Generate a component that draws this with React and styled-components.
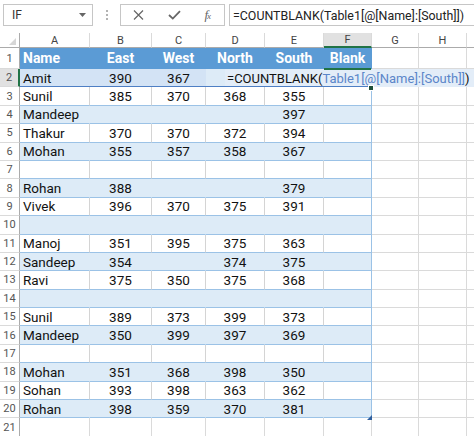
import React from 'react';
import styled, { createGlobalStyle } from 'styled-components';

const Global = createGlobalStyle`
  html, body { margin: 0; padding: 0; background: #fff; }
  body {
    width: 474px; height: 436px; overflow: hidden;
    font-family: Roboto, "Noto Sans", "Liberation Sans", sans-serif;
  }
`;

const Page = styled.div`
  display: flex;
  flex-direction: column;
  width: 474px;
  height: 436px;
  overflow: hidden;
`;

/* ---------- formula bar ---------- */
const Bar = styled.div`
  display: flex;
  align-items: flex-start;
  height: 33px;
  padding-top: 4px;
  box-sizing: border-box;
  flex-shrink: 0;
`;

const NameBox = styled.div`
  margin-left: 3px;
  width: 90px;
  height: 22px;
  box-sizing: border-box;
  border: 1px solid #c6c6c6;
  display: flex;
  align-items: center;
  justify-content: space-between;
  padding: 0 6px 0 8px;
  font-size: 12px;
  color: #333;
`;

const Dots = styled.div`
  width: 27px;
  height: 22px;
  display: flex;
  flex-direction: column;
  align-items: center;
  justify-content: center;
  gap: 2px;
  span { width: 2px; height: 2px; background: #9a9a9a; border-radius: 1px; }
`;

const Buttons = styled.div`
  width: 105px;
  height: 22px;
  box-sizing: border-box;
  border: 1px solid #c6c6c6;
  display: flex;
  align-items: center;
  justify-content: space-between;
  padding: 0 14px 0 12px;
  color: #666;
`;

const Fx = styled.span`
  font-family: "Liberation Serif", serif;
  font-style: italic;
  font-size: 13px;
  color: #666;
  letter-spacing: -1px;
  small { font-size: 9px; }
`;

const Input = styled.div`
  margin-left: 4px;
  flex: 1;
  min-width: 0;
  height: 22px;
  box-sizing: border-box;
  border: 1px solid #c6c6c6;
  border-right: none;
  display: flex;
  align-items: center;
  padding-left: 3px;
  font-size: 12.4px;
  color: #222;
  white-space: nowrap;
  overflow: hidden;
`;

/* ---------- sheet ---------- */
const Sheet = styled.div`
  position: relative;
  display: grid;
  grid-template-columns: 20px 70px 62px 54px 59px 59px 48px 47px 48px 40px;
  grid-template-rows: 15px 21px repeat(20, 18.4px);
  width: 507px;
`;

const Corner = styled.div`
  box-sizing: border-box;
  border-right: 1px solid #ababab;
  border-bottom: 1px solid #ababab;
  display: flex;
  align-items: flex-end;
  justify-content: flex-end;
  padding: 0 3px 2px 0;
`;

const ColHead = styled.div`
  box-sizing: border-box;
  display: flex;
  align-items: center;
  justify-content: center;
  font-size: 11px;
  color: #444;
  background: ${p => (p.$active ? '#e1e1e1' : '#fff')};
  border-right: 1px solid #dadada;
  border-bottom: ${p => (p.$active ? '2px solid #217346' : '1px solid #ababab')};
`;

const RowHead = styled.div`
  box-sizing: border-box;
  display: flex;
  align-items: center;
  justify-content: center;
  font-size: 11px;
  color: #555;
  background: ${p => (p.$active ? '#e1e1e1' : '#fff')};
  border-right: ${p => (p.$active ? '2px solid #217346' : '1px solid #ababab')};
  border-bottom: 1px solid #dadada;
`;

const KIND = {
  head: { bg: '#5b9bd5', r: '#5b9bd5', b: '#5b9bd5' },
  band: { bg: '#ddebf7', r: '#ddebf7', b: '#9bc2e6' },
  sel: { bg: '#d3e3f5', r: '#d3e3f5', b: '#9bc2e6' },
  plain: { bg: '#ffffff', r: '#d4d4d4', b: '#9bc2e6' },
  out: { bg: '#ffffff', r: '#dadada', b: '#dadada' },
};

const Cell = styled.div`
  box-sizing: border-box;
  display: flex;
  align-items: center;
  justify-content: ${p => (p.$left ? 'flex-start' : 'center')};
  padding: 0 3px;
  font-size: ${p => (p.$kind === 'head' ? '14px' : '13.5px')};
  font-weight: ${p => (p.$kind === 'head' ? 700 : 400)};
  color: ${p => (p.$kind === 'head' ? '#fff' : '#111')};
  white-space: nowrap;
  overflow: hidden;
  background: ${p => KIND[p.$kind].bg};
  border-right: 1px solid ${p => (p.$edge ? '#9bc2e6' : KIND[p.$kind].r)};
  border-bottom: 1px solid ${p => KIND[p.$kind].b};
`;

const Editor = styled.div`
  position: absolute;
  left: 225px;
  top: 36px;
  width: 249px;
  height: 18.4px;
  box-sizing: border-box;
  background: #e3edf8;
  display: flex;
  align-items: center;
  padding-left: 2px;
  font-size: 13px;
  color: #111;
  white-space: nowrap;
  overflow: hidden;
`;

const Ref = styled.span`
  color: #5b86c9;
`;

const RefLine = styled.div`
  position: absolute;
  left: 20px;
  top: 53.4px;
  width: 350px;
  height: 1px;
  background: #4e7fc4;
`;

const ActiveTop = styled.div`
  position: absolute;
  left: 324px;
  top: 35px;
  width: 47px;
  height: 2px;
  background: #217346;
`;

const Handle = styled.div`
  position: absolute;
  left: 368px;
  top: 52px;
  width: 4px;
  height: 4px;
  background: #1e4f3a;
  border: 1px solid #fff;
`;

const Resize = styled.svg`
  position: absolute;
  left: 367px;
  top: 382px;
`;

const COLS = ['A', 'B', 'C', 'D', 'E', 'F', 'G', 'H', ''];

const DATA = {
  1: ['Name', 'East', 'West', 'North', 'South', 'Blank'],
  2: ['Amit', '390', '367', '', '', ''],
  3: ['Sunil', '385', '370', '368', '355', ''],
  4: ['Mandeep', '', '', '', '397', ''],
  5: ['Thakur', '370', '370', '372', '394', ''],
  6: ['Mohan', '355', '357', '358', '367', ''],
  7: ['', '', '', '', '', ''],
  8: ['Rohan', '388', '', '', '379', ''],
  9: ['Vivek', '396', '370', '375', '391', ''],
  10: ['', '', '', '', '', ''],
  11: ['Manoj', '351', '395', '375', '363', ''],
  12: ['Sandeep', '354', '', '374', '375', ''],
  13: ['Ravi', '375', '350', '375', '368', ''],
  14: ['', '', '', '', '', ''],
  15: ['Sunil', '389', '373', '399', '373', ''],
  16: ['Mandeep', '350', '399', '397', '369', ''],
  17: ['', '', '', '', '', ''],
  18: ['Mohan', '351', '368', '398', '350', ''],
  19: ['Sohan', '393', '398', '363', '362', ''],
  20: ['Rohan', '398', '359', '370', '381', ''],
};

function kindFor(r, c) {
  if (c > 5 || r > 20) return 'out';
  if (r === 1) return 'head';
  if (r === 2 && c <= 2) return 'sel';
  return r % 2 === 0 ? 'band' : 'plain';
}

function XIcon() {
  return (
    <svg width="11" height="10" viewBox="0 0 11 10">
      <path d="M1 0.5 L10 9.5 M10 0.5 L1 9.5" stroke="#666" strokeWidth="1.2" fill="none" />
    </svg>
  );
}

function CheckIcon() {
  return (
    <svg width="13" height="10" viewBox="0 0 13 10">
      <path d="M1 5 L4.8 8.6 L12 1.2" stroke="#666" strokeWidth="1.8" fill="none" />
    </svg>
  );
}

function Caret() {
  return (
    <svg width="7" height="4" viewBox="0 0 7 4">
      <path d="M0 0 H7 L3.5 4 Z" fill="#666" />
    </svg>
  );
}

function CornerMark() {
  return (
    <svg width="7" height="7" viewBox="0 0 7 7">
      <path d="M7 0 V7 H0 Z" fill="#d6d6d6" />
    </svg>
  );
}

export default function App() {
  const rows = [];
  for (let r = 1; r <= 21; r++) {
    rows.push(
      <RowHead key={`rh${r}`} $active={r === 2}>{r}</RowHead>
    );
    COLS.forEach((col, c) => {
      const kind = kindFor(r, c);
      const text = DATA[r] && c <= 5 ? DATA[r][c] : '';
      rows.push(
        <Cell
          key={`c${c}-${r}`}
          $kind={kind}
          $left={c === 0}
          $edge={c === 5 && r >= 2 && r <= 20}
        >
          {text}
        </Cell>
      );
    });
  }

  return (
    <Page>
      <Global />
      <Bar>
        <NameBox>
          <span>IF</span>
          <Caret />
        </NameBox>
        <Dots><span /><span /><span /></Dots>
        <Buttons>
          <XIcon />
          <CheckIcon />
          <Fx>f<small>x</small></Fx>
        </Buttons>
        <Input>=COUNTBLANK(Table1[@[Name]:[South]])</Input>
      </Bar>
      <Sheet>
        <Corner><CornerMark /></Corner>
        {COLS.map((c, i) => (
          <ColHead key={`h${i}`} $active={i === 5}>{c}</ColHead>
        ))}
        {rows}
        <Editor>
          =COUNTBLANK(<Ref>Table1[@[Name]:[South]]</Ref>)
        </Editor>
        <RefLine />
        <ActiveTop />
        <Handle />
        <Resize width="5" height="5" viewBox="0 0 5 5">
          <path d="M5 0 V5 H0 Z" fill="#2f5f9e" />
        </Resize>
      </Sheet>
    </Page>
  );
}
